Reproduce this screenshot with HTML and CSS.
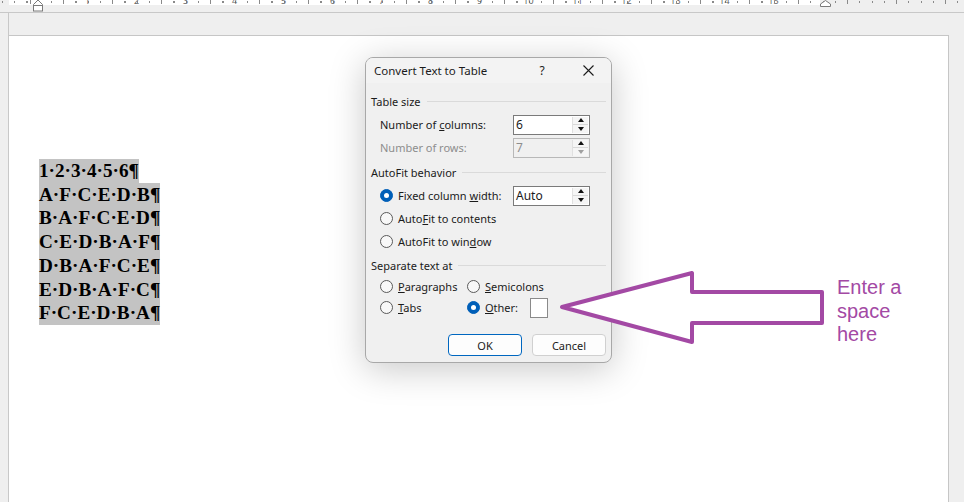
FILE: index.html
```html
<!DOCTYPE html>
<html lang="en">

<head>
    <meta charset="UTF-8">
    <meta name="viewport" content="width=device-width, initial-scale=1.0">
    <title>Convert Text to Table</title>
    <link rel="stylesheet" href="styles.css">
</head>

<body>
    <div class="ruler">
        <div class="ruler-track">
            <div class="ruler-nums">
                <span>1</span><span>2</span><span>3</span><span>4</span><span>5</span>
                <span>6</span><span>7</span><span>8</span><span>9</span><span>10</span>
                <span>11</span><span>12</span><span>13</span><span>14</span><span>15</span>
            </div>
        </div>
        <svg class="indent-left" width="12" height="13" viewBox="0 0 12 13">
            <path d="M1.5 5.5 L6 1 L10.5 5.5 V6.5 H1.5 Z" fill="#fff" stroke="#7a7a7a" />
            <rect x="1.5" y="6.5" width="9" height="5.5" fill="#fff" stroke="#7a7a7a" />
        </svg>
        <svg class="indent-right" width="13" height="7" viewBox="0 0 13 7">
            <path d="M1.5 6.5 V4 L6.5 0.5 L11.5 4 V6.5 Z" fill="#fff" stroke="#7a7a7a" />
        </svg>
    </div>

    <div class="workspace">
        <div class="gutter"></div>
        <div class="canvas">
            <div class="page">
                <div class="doc-text">
                    <div class="line"><span>1·2·3·4·5·6¶</span></div>
                    <div class="line"><span>A·F·C·E·D·B¶</span></div>
                    <div class="line"><span>B·A·F·C·E·D¶</span></div>
                    <div class="line"><span>C·E·D·B·A·F¶</span></div>
                    <div class="line"><span>D·B·A·F·C·E¶</span></div>
                    <div class="line"><span>E·D·B·A·F·C¶</span></div>
                    <div class="line"><span>F·C·E·D·B·A¶</span></div>
                </div>
            </div>
        </div>
    </div>

    <!-- dialog floats over the page -->
    <div class="dialog">
        <div class="title-bar">
            <div class="title">Convert Text to Table</div>
            <div class="title-btn">?</div>
            <div class="title-btn">
                <svg width="11" height="11" viewBox="0 0 11 11">
                    <path d="M0.5 0.5 L10.5 10.5 M10.5 0.5 L0.5 10.5" stroke="#1b1b1b" stroke-width="1.1" />
                </svg>
            </div>
        </div>

        <div class="dialog-body">
            <div class="legend">Table size</div>
            <div class="field">
                <label class="field-label"><span>Number of <u>c</u>olumns:</span></label>
                <div class="spinner">
                    <span class="spin-value">6</span>
                    <span class="spin-btns"><i class="up"></i><i class="down"></i></span>
                </div>
            </div>
            <div class="field disabled">
                <label class="field-label"><span>Number of rows:</span></label>
                <div class="spinner">
                    <span class="spin-value">7</span>
                    <span class="spin-btns"><i class="up"></i><i class="down"></i></span>
                </div>
            </div>

            <div class="legend section">AutoFit behavior</div>
            <div class="field">
                <label class="field-label"><span class="radio checked"></span><span>Fixed column <u>w</u>idth:</span></label>
                <div class="spinner">
                    <span class="spin-value">Auto</span>
                    <span class="spin-btns"><i class="up"></i><i class="down"></i></span>
                </div>
            </div>
            <div class="field">
                <label class="field-label"><span class="radio"></span><span>Auto<u>F</u>it to contents</span></label>
            </div>
            <div class="field">
                <label class="field-label"><span class="radio"></span><span>AutoFit to win<u>d</u>ow</span></label>
            </div>

            <div class="legend section short">Separate text at</div>
            <div class="options">
                <label class="option"><span class="radio"></span><span><u>P</u>aragraphs</span></label>
                <label class="option"><span class="radio"></span><span><u>S</u>emicolons</span></label>
                <label class="option"><span class="radio"></span><span><u>T</u>abs</span></label>
                <label class="option"><span class="radio checked"></span><span><u>O</u>ther:</span><span class="other-box"></span></label>
            </div>

            <div class="buttons">
                <button class="btn primary">OK</button>
                <button class="btn">Cancel</button>
            </div>
        </div>
    </div>

    <svg class="callout-arrow" width="280" height="90" viewBox="0 0 280 90">
        <polygon points="7,42 137,8 137,27 267,27 267,58 137,58 137,77" fill="#fff" stroke="#a349a4"
            stroke-width="4" stroke-linejoin="round" />
    </svg>
    <div class="callout-text">Enter a<br>space<br>here</div>
</body>

</html>
```

FILE: styles.css
```css
html,
body {
    margin: 0;
    height: 100%;
}

body {
    width: 964px;
    height: 502px;
    overflow: hidden;
    background: #efefef;
    position: relative;
    font-family: "Noto Sans", "Open Sans", sans-serif;
}

/* ruler */
.ruler {
    height: 12px;
    border-bottom: 1px solid #c8c8c8;
    position: relative;
}

.ruler-track {
    height: 5px;
    overflow: hidden;
    background-image:
        repeating-linear-gradient(90deg, #8a8a8a 0 1px, transparent 1px 49px),
        repeating-linear-gradient(90deg, #8a8a8a 0 1px, transparent 1px 12.25px),
        linear-gradient(90deg, #efefef 0 9px, #fff 9px 820px, #efefef 820px);
    background-size: 100% 4px, 100% 2px, 100% 100%;
    background-position: 63px 0, 2px 1px, 0 0;
    background-repeat: repeat-x, repeat-x, no-repeat;
}

.ruler-nums {
    display: flex;
    padding-left: 63px;
}

.ruler-nums span {
    width: 49px;
    flex: none;
    text-align: center;
    font-size: 9px;
    line-height: 9px;
    margin-top: -4px;
    color: #666;
}

.indent-left {
    position: absolute;
    left: 32px;
    top: -1px;
}

.indent-right {
    position: absolute;
    left: 819px;
    top: 0;
}

/* document area */
.workspace {
    display: flex;
    height: 489px;
}

.gutter {
    width: 8px;
    border-right: 1px solid #c8c8c8;
}

.canvas {
    flex: 1;
    padding: 22px 15px 0 0;
}

.page {
    height: 100%;
    box-sizing: border-box;
    background: #fff;
    border-top: 1px solid #c6c6c6;
    border-right: 1px solid #c6c6c6;
    padding: 123px 0 0 30px;
}

.doc-text {
    font: bold 19.2px "Liberation Serif", "Times New Roman", serif;
    color: #000;
}

.line span {
    display: inline-block;
    line-height: 23.7px;
    background: #c3c3c3;
}

/* dialog */
.dialog {
    position: absolute;
    left: 365px;
    top: 57px;
    width: 247px;
    height: 306px;
    box-sizing: border-box;
    border: 1px solid #a8a8a8;
    border-radius: 8px;
    background: #f0f0f0;
    box-shadow: 0 6px 36px rgba(0, 0, 0, 0.22);
    font-size: 11px;
    color: #1b1b1b;
    display: flex;
    flex-direction: column;
    overflow: hidden;
}

.title-bar {
    height: 25px;
    display: flex;
    align-items: center;
    background: #f3f3f3;
    padding-left: 8px;
}

.title {
    flex: 1;
    font-size: 11.5px;
}

.title-btn {
    width: 46px;
    height: 100%;
    display: flex;
    align-items: center;
    justify-content: center;
    font-size: 12px;
}

.dialog-body {
    padding: 7px 5px 0 5px;
}

.legend {
    height: 23px;
    display: flex;
    align-items: center;
}

.legend::after {
    content: "";
    flex: 1;
    height: 1px;
    background: #dadada;
    margin-left: 6px;
}

.legend.section {
    margin-top: 2px;
}

.legend.short {
    height: 21px;
}

.field {
    height: 23px;
    display: flex;
    align-items: center;
    padding-left: 9px;
}

.field-label {
    width: 133px;
    display: flex;
    align-items: center;
    white-space: nowrap;
}

.disabled {
    color: #8d8d8d;
}

.radio {
    width: 11px;
    height: 11px;
    border: 1px solid #5a5a5a;
    border-radius: 50%;
    background: #f8f8f8;
    margin-right: 5px;
    flex: none;
    position: relative;
}

.radio.checked {
    background: #005fb8;
    border-color: #005fb8;
}

.radio.checked::after {
    content: "";
    position: absolute;
    left: 3px;
    top: 3px;
    width: 5px;
    height: 5px;
    border-radius: 50%;
    background: #fff;
}

/* spin box */
.spinner {
    width: 77px;
    height: 20px;
    box-sizing: border-box;
    border: 1px solid #7a7a7a;
    background: #fff;
    display: flex;
    align-items: center;
}

.disabled .spinner {
    border-color: #b8b8b8;
    background: #f0f0f0;
}

.spin-value {
    flex: 1;
    padding-left: 2px;
    font-size: 12px;
}

.spin-btns {
    width: 15px;
    height: 16px;
    margin-right: 1px;
    display: flex;
    flex-direction: column;
    border-left: 1px solid #e0e0e0;
}

.spin-btns i {
    flex: 1;
    display: flex;
    align-items: center;
    justify-content: center;
    background: #f5f5f5;
}

.spin-btns i + i {
    border-top: 1px solid #d8d8d8;
}

.spin-btns .up::before {
    content: "";
    border-left: 3.5px solid transparent;
    border-right: 3.5px solid transparent;
    border-bottom: 4px solid #111;
}

.spin-btns .down::before {
    content: "";
    border-left: 3.5px solid transparent;
    border-right: 3.5px solid transparent;
    border-top: 4px solid #111;
}

.disabled .spin-btns .down::before {
    border-top-color: #a0a0a0;
}

.options {
    display: grid;
    grid-template-columns: 87px auto;
    grid-auto-rows: 21px;
    padding-left: 9px;
}

.option {
    display: flex;
    align-items: center;
    white-space: nowrap;
}

.other-box {
    width: 18px;
    height: 20px;
    box-sizing: border-box;
    border: 1px solid #8a8a8a;
    background: #fff;
    margin-left: 12px;
}

.buttons {
    display: flex;
    justify-content: flex-end;
    gap: 10px;
    margin-top: 16px;
}

.btn {
    width: 74px;
    height: 22px;
    box-sizing: border-box;
    border: 1px solid #d0d0d0;
    border-radius: 4px;
    background: #fdfdfd;
    font: 11px "Noto Sans", "Open Sans", sans-serif;
    color: #1b1b1b;
    padding: 0;
}

.btn.primary {
    border-color: #0067c0;
}

/* callout */
.callout-arrow {
    position: absolute;
    left: 555px;
    top: 265px;
}

.callout-text {
    position: absolute;
    left: 837px;
    top: 276px;
    font: 20px/23.5px "Liberation Sans", Arial, sans-serif;
    color: #a349a4;
}
```
